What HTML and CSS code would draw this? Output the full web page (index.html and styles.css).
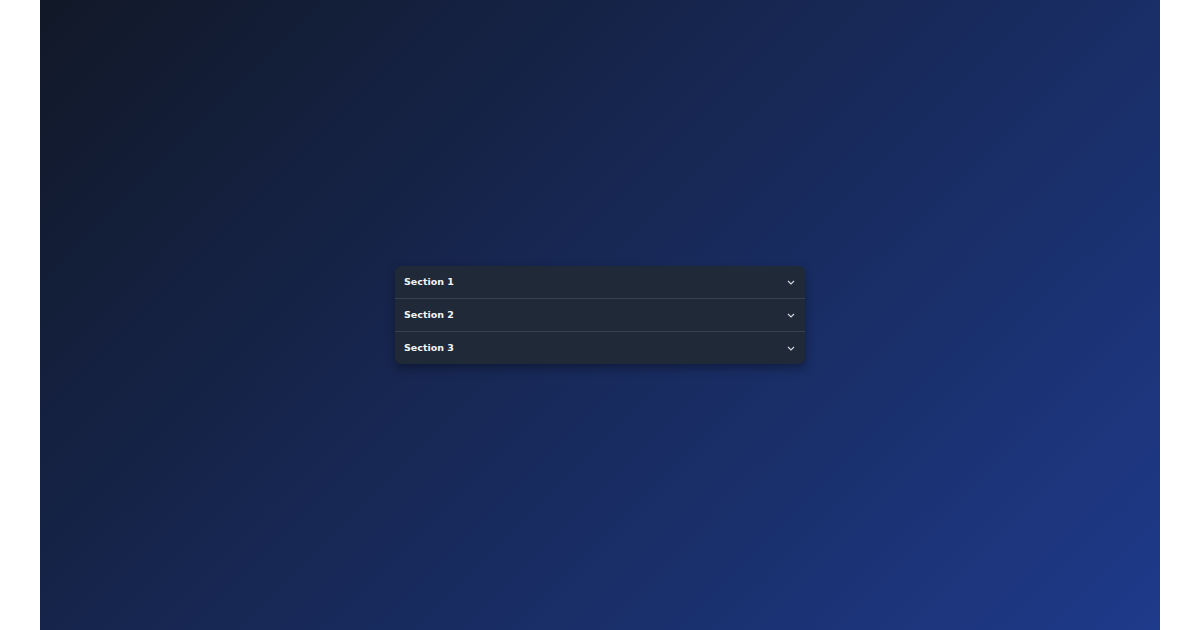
FILE: index.html
```html
<!DOCTYPE html>
<html>
<head>
<meta charset="utf-8">
<link rel="stylesheet" href="styles.css">
</head>
<body>
<div class="page">
  <div class="accordion">
    <div class="item">
      <span class="title">Section 1</span>
      <svg class="chev" width="8" height="5" viewBox="0 0 8 5"><path d="M1 1 L4 4 L7 1" fill="none" stroke="#d1d5db" stroke-width="1.2"/></svg>
    </div>
    <div class="item">
      <span class="title">Section 2</span>
      <svg class="chev" width="8" height="5" viewBox="0 0 8 5"><path d="M1 1 L4 4 L7 1" fill="none" stroke="#d1d5db" stroke-width="1.2"/></svg>
    </div>
    <div class="item">
      <span class="title">Section 3</span>
      <svg class="chev" width="8" height="5" viewBox="0 0 8 5"><path d="M1 1 L4 4 L7 1" fill="none" stroke="#d1d5db" stroke-width="1.2"/></svg>
    </div>
  </div>
</div>
</body>
</html>
```
FILE: styles.css
```css
html, body { margin: 0; padding: 0; background: #ffffff; }
.page {
  width: 1120px;
  height: 630px;
  margin: 0 auto;
  background: linear-gradient(135deg, #111827 0%, #1e3a8a 100%);
  display: flex;
  align-items: center;
  justify-content: center;
  font-family: "DejaVu Sans", sans-serif;
}
.accordion {
  width: 410px;
  background: #1f2937;
  border-radius: 6px;
  box-shadow: 0 4px 10px rgba(0,0,0,0.35);
  overflow: hidden;
}
.item {
  height: 33px;
  display: flex;
  align-items: center;
  justify-content: space-between;
  padding: 0 10px 0 9px;
  box-sizing: border-box;
  border-top: 1px solid #374151;
}
.item:first-child { border-top: none; height: 32px; }
.title {
  color: #f3f4f6;
  font-size: 9.5px;
  font-weight: bold;
  line-height: 1;
  margin-top: -1px;
}
.chev { display: block; }
```
